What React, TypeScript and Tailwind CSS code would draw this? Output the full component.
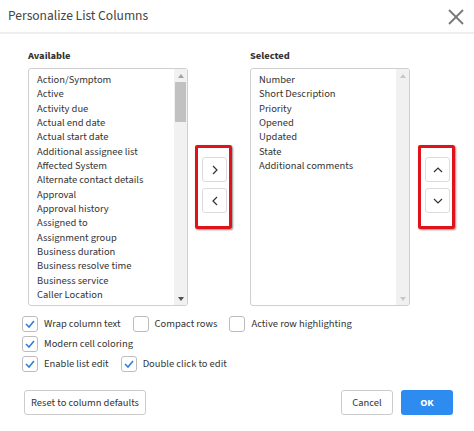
import React from "react";

const available = [
  "Action/Symptom",
  "Active",
  "Activity due",
  "Actual end date",
  "Actual start date",
  "Additional assignee list",
  "Affected System",
  "Alternate contact details",
  "Approval",
  "Approval history",
  "Assigned to",
  "Assignment group",
  "Business duration",
  "Business resolve time",
  "Business service",
  "Caller Location",
  "Category",
];

const selected = [
  "Number",
  "Short Description",
  "Priority",
  "Opened",
  "Updated",
  "State",
  "Additional comments",
];

type Dir = "left" | "right" | "up" | "down";

function Chevron({ dir }: { dir: Dir }) {
  const pts: Record<Dir, string> = {
    right: "3,1 7,5 3,9",
    left: "7,1 3,5 7,9",
    up: "1,7 5,3 9,7",
    down: "1,3 5,7 9,3",
  };
  return (
    <svg width="10" height="10" viewBox="0 0 10 10">
      <polyline points={pts[dir]} fill="none" stroke="#333" strokeWidth="1.2" />
    </svg>
  );
}

function SmallBtn({ dir }: { dir: Dir }) {
  return (
    <div className="w-[25px] h-[25px] flex items-center justify-center bg-white border border-[#dcdcdc] rounded-[3px]">
      <Chevron dir={dir} />
    </div>
  );
}

function RedBox({ a, b }: { a: Dir; b: Dir }) {
  return (
    <div className="w-[37px] h-[84px] border-[3px] border-[#e0121a] rounded-[2px] shadow-[1px_1px_2px_rgba(0,0,0,0.45)] pt-[9px] pl-[4px] flex flex-col gap-[6px]">
      <SmallBtn dir={a} />
      <SmallBtn dir={b} />
    </div>
  );
}

function Listbox({ items, thumb }: { items: string[]; thumb: boolean }) {
  return (
    <div className="w-[160px] h-[238px] border border-[#cfcfcf] rounded-[3px] flex overflow-hidden bg-white">
      <div className="flex-1 pl-[8px] pt-[4px] overflow-hidden">
        {items.map((t) => (
          <div key={t} className="h-[14.35px] leading-[14.35px] text-[10.5px] text-[#333] whitespace-nowrap">
            {t}
          </div>
        ))}
      </div>
      <div className="w-[13px] h-full bg-[#f1f1f1] flex flex-col items-center">
        <div className="h-[13px] flex items-center justify-center">
          <svg width="6" height="4" viewBox="0 0 6 4">
            <polygon points="0,4 3,0 6,4" fill={thumb ? "#a3a3a3" : "#c8c8c8"} />
          </svg>
        </div>
        <div className="flex-1 w-full px-[1px]">
          {thumb && <div className="w-full h-[40px] bg-[#c1c1c1]" />}
        </div>
        <div className="h-[13px] flex items-center justify-center">
          <svg width="6" height="4" viewBox="0 0 6 4">
            <polygon points="0,0 6,0 3,4" fill={thumb ? "#505050" : "#c8c8c8"} />
          </svg>
        </div>
      </div>
    </div>
  );
}

function Check({ checked, label }: { checked: boolean; label: string }) {
  return (
    <div className="flex items-center gap-[6px]">
      <div className="w-[16px] h-[16px] border border-[#bdbdbd] rounded-[3px] bg-white flex items-center justify-center">
        {checked && (
          <svg width="10" height="8" viewBox="0 0 10 8">
            <polyline points="1,4 4,7 9,1" fill="none" stroke="#2b7fd9" strokeWidth="1.6" />
          </svg>
        )}
      </div>
      <span className="text-[10.5px] text-[#333] leading-[16px]">{label}</span>
    </div>
  );
}

export default function App() {
  return (
    <div
      className="w-[474px] h-[431px] bg-white overflow-hidden"
      style={{ fontFamily: '"Source Sans 3", "Source Sans Pro", Lato, sans-serif' }}
    >
      <div className="h-[34px] border-b-[2px] border-[#eeeeee] flex items-center justify-between pl-[8px] pr-[10px]">
        <span className="text-[13.5px] text-[#444] leading-[20px]">Personalize List Columns</span>
        <svg width="16" height="16" viewBox="0 0 16 16" className="mt-[1px]">
          <line x1="1" y1="1" x2="15" y2="15" stroke="#777" strokeWidth="1.8" />
          <line x1="15" y1="1" x2="1" y2="15" stroke="#777" strokeWidth="1.8" />
        </svg>
      </div>
      <div className="pl-[22px] pt-[14px]">
        <div className="flex ml-[6px]">
          <div>
            <div className="text-[10.5px] font-bold text-[#333] leading-[16px] mb-[4px]">Available</div>
            <Listbox items={available} thumb={true} />
          </div>
          <div className="ml-[7px] mt-[97px]">
            <RedBox a="right" b="left" />
          </div>
          <div className="ml-[18px]">
            <div className="text-[10.5px] font-bold text-[#333] leading-[16px] mb-[4px]">Selected</div>
            <Listbox items={selected} thumb={false} />
          </div>
          <div className="ml-[8px] mt-[97px]">
            <RedBox a="up" b="down" />
          </div>
        </div>
        <div className="mt-[10px] flex flex-col gap-[4px]">
          <div className="flex items-center gap-[12px]">
            <Check checked={true} label="Wrap column text" />
            <Check checked={false} label="Compact rows" />
            <Check checked={false} label="Active row highlighting" />
          </div>
          <Check checked={true} label="Modern cell coloring" />
          <div className="flex items-center gap-[12px]">
            <Check checked={true} label="Enable list edit" />
            <Check checked={true} label="Double click to edit" />
          </div>
        </div>
      </div>
      <div className="flex items-center mt-[18px] pl-[24px] pr-[21px]">
        <button className="h-[25px] px-[6px] border border-[#cccccc] rounded-[3px] text-[10.5px] text-[#333] bg-white">
          Reset to column defaults
        </button>
        <div className="flex-1" />
        <button className="h-[25px] w-[52px] border border-[#cccccc] rounded-[3px] text-[10.5px] text-[#333] bg-white">
          Cancel
        </button>
        <button className="h-[25px] w-[52px] ml-[8px] rounded-[3px] text-[10.5px] font-bold text-white bg-[#2e8bf0]">
          OK
        </button>
      </div>
    </div>
  );
}
